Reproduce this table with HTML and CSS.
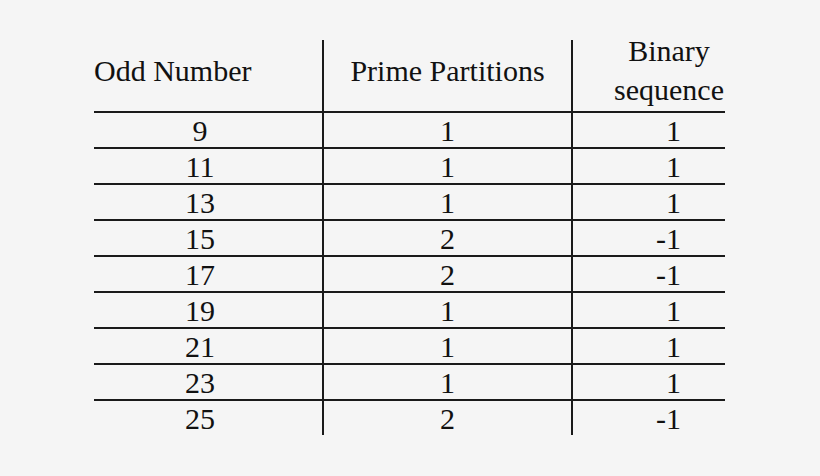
FILE: index.html
```html
<!DOCTYPE html>
<html>
<head>
<meta charset="utf-8">
<link rel="stylesheet" href="styles.css">
</head>
<body>
<div class="page">
  <div class="table">
    <div class="row head">
      <div class="cell c1">Odd Number</div>
      <div class="cell c2">Prime Partitions</div>
      <div class="cell c3"><span>Binary<br>sequence</span></div>
    </div>
    <div class="row"><div class="cell c1">9</div><div class="cell c2">1</div><div class="cell c3">1</div></div>
    <div class="row"><div class="cell c1">11</div><div class="cell c2">1</div><div class="cell c3">1</div></div>
    <div class="row"><div class="cell c1">13</div><div class="cell c2">1</div><div class="cell c3">1</div></div>
    <div class="row"><div class="cell c1">15</div><div class="cell c2">2</div><div class="cell c3">-1</div></div>
    <div class="row"><div class="cell c1">17</div><div class="cell c2">2</div><div class="cell c3">-1</div></div>
    <div class="row"><div class="cell c1">19</div><div class="cell c2">1</div><div class="cell c3">1</div></div>
    <div class="row"><div class="cell c1">21</div><div class="cell c2">1</div><div class="cell c3">1</div></div>
    <div class="row"><div class="cell c1">23</div><div class="cell c2">1</div><div class="cell c3">1</div></div>
    <div class="row"><div class="cell c1">25</div><div class="cell c2">2</div><div class="cell c3">-1</div></div>
  </div>
</div>
</body>
</html>
```
FILE: styles.css
```css
html, body {
  margin: 0;
  padding: 0;
  background: #f5f5f5;
}
.page {
  width: 820px;
  height: 476px;
  box-sizing: border-box;
  padding: 40px 0 0 94px;
  font-family: "Liberation Serif", "Times New Roman", serif;
  font-size: 30px;
  color: #111;
}
.table {
  width: 631px;
  display: flex;
  flex-direction: column;
}
.row {
  display: grid;
  grid-template-columns: 228px 249px 154px;
  grid-template-rows: 34px;
  height: 36px;
  box-sizing: border-box;
  border-top: 2px solid #1a1a1a;
}
.row.head {
  height: 71px;
  grid-template-rows: 71px;
  border-top: none;
}
.cell {
  box-sizing: border-box;
  line-height: 33px;
  padding-top: 1px;
  white-space: nowrap;
  min-height: 0;
}
.c1 {
  text-align: center;
  padding-right: 16px;
}
.c2 {
  border-left: 2px solid #1a1a1a;
  text-align: center;
}
.c3 {
  border-left: 2px solid #1a1a1a;
  text-align: right;
  padding-right: 44px;
}
.head .cell {
  display: flex;
  align-items: center;
  line-height: 39px;
  padding-top: 0;
  padding-bottom: 11px;
}
.head .c1 {
  justify-content: flex-start;
  padding-right: 0;
}
.head .c2 {
  justify-content: center;
}
.head .c3 {
  justify-content: center;
  text-align: center;
  padding-right: 0;
  padding-left: 40px;
}
```
